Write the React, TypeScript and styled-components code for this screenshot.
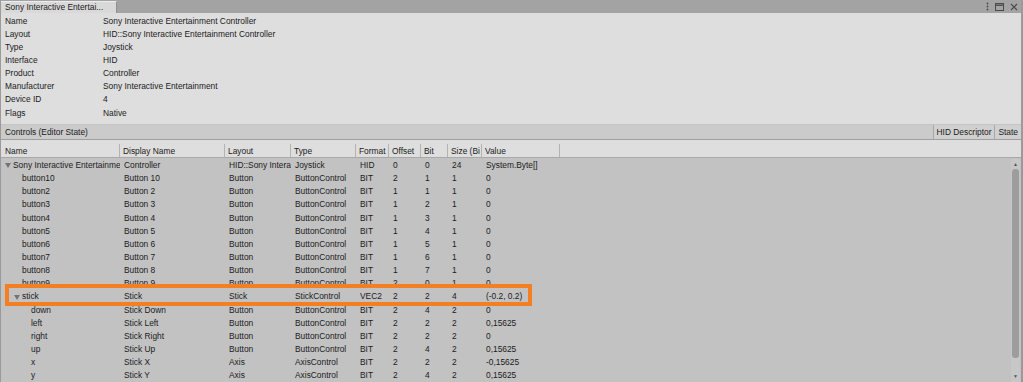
import React from "react";
import styled, { createGlobalStyle } from "styled-components";

type Row = {
  name: string;
  display: string;
  layout: string;
  type: string;
  format: string;
  offset: string;
  bit: string;
  size: string;
  value: string;
  depth: number;
  open?: boolean;
};

const info: [string, string][] = [
  ["Name", "Sony Interactive Entertainment Controller"],
  ["Layout", "HID::Sony Interactive Entertainment Controller"],
  ["Type", "Joystick"],
  ["Interface", "HID"],
  ["Product", "Controller"],
  ["Manufacturer", "Sony Interactive Entertainment"],
  ["Device ID", "4"],
  ["Flags", "Native"],
];

const btn = (n: string, offset: string, bit: string): Row => ({
  name: "button" + n,
  display: "Button " + n,
  layout: "Button",
  type: "ButtonControl",
  format: "BIT",
  offset,
  bit,
  size: "1",
  value: "0",
  depth: 1,
});

// column widths are narrow, so long names show as the window clips them
const rows: Row[] = [
  {
    name: "Sony Interactive Entertainme",
    display: "Controller",
    layout: "HID::Sony Intera",
    type: "Joystick",
    format: "HID",
    offset: "0",
    bit: "0",
    size: "24",
    value: "System.Byte[]",
    depth: 0,
    open: true,
  },
  btn("10", "2", "1"),
  btn("2", "1", "1"),
  btn("3", "1", "2"),
  btn("4", "1", "3"),
  btn("5", "1", "4"),
  btn("6", "1", "5"),
  btn("7", "1", "6"),
  btn("8", "1", "7"),
  btn("9", "2", "0"),
  {
    name: "stick",
    display: "Stick",
    layout: "Stick",
    type: "StickControl",
    format: "VEC2",
    offset: "2",
    bit: "2",
    size: "4",
    value: "(-0.2, 0.2)",
    depth: 1,
    open: true,
  },
  { name: "down", display: "Stick Down", layout: "Button", type: "ButtonControl", format: "BIT", offset: "2", bit: "4", size: "2", value: "0", depth: 2 },
  { name: "left", display: "Stick Left", layout: "Button", type: "ButtonControl", format: "BIT", offset: "2", bit: "2", size: "2", value: "0,15625", depth: 2 },
  { name: "right", display: "Stick Right", layout: "Button", type: "ButtonControl", format: "BIT", offset: "2", bit: "2", size: "2", value: "0", depth: 2 },
  { name: "up", display: "Stick Up", layout: "Button", type: "ButtonControl", format: "BIT", offset: "2", bit: "4", size: "2", value: "0,15625", depth: 2 },
  { name: "x", display: "Stick X", layout: "Axis", type: "AxisControl", format: "BIT", offset: "2", bit: "2", size: "2", value: "-0,15625", depth: 2 },
  { name: "y", display: "Stick Y", layout: "Axis", type: "AxisControl", format: "BIT", offset: "2", bit: "4", size: "2", value: "0,15625", depth: 2 },
];

const headers = ["Name", "Display Name", "Layout", "Type", "Format", "Offset", "Bit", "Size (Bi", "Value", ""];

const App = () => {
  return (
    <>
      <GlobalStyle />
      <Window>
        <TabBar>
          <Tab>Sony Interactive Entertai...</Tab>
          <WindowIcons>
            <svg width="3" height="9" viewBox="0 0 3 9">
              <circle cx="1.5" cy="1.5" r="0.9" fill="#4a4a4a" />
              <circle cx="1.5" cy="4.5" r="0.9" fill="#4a4a4a" />
              <circle cx="1.5" cy="7.5" r="0.9" fill="#4a4a4a" />
            </svg>
            <svg width="9" height="8" viewBox="0 0 9 8">
              <rect x="0.5" y="0.5" width="8" height="7" fill="none" stroke="#4a4a4a" />
              <line x1="0.5" y1="2.2" x2="8.5" y2="2.2" stroke="#4a4a4a" strokeWidth="1.4" />
            </svg>
            <svg width="8" height="8" viewBox="0 0 8 8">
              <path d="M1 1L7 7M7 1L1 7" stroke="#4a4a4a" strokeWidth="1.1" />
            </svg>
          </WindowIcons>
        </TabBar>

        <InfoPanel>
          {info.map(([label, value]) => (
            <React.Fragment key={label}>
              <InfoLabel>{label}</InfoLabel>
              <InfoValue>{value}</InfoValue>
            </React.Fragment>
          ))}
        </InfoPanel>

        <Toolbar>
          <ToolbarTitle>Controls (Editor State)</ToolbarTitle>
          <ToolbarButton>HID Descriptor</ToolbarButton>
          <ToolbarButton>State</ToolbarButton>
        </Toolbar>

        <HeaderRow>
          {headers.map((h, i) => (
            <HeaderCell key={i} $last={i === headers.length - 1}>
              {h}
            </HeaderCell>
          ))}
        </HeaderRow>

        <Body>
          <Rows>
            {rows.map((r) => (
              <TableRow key={r.name}>
                <NameCell $depth={r.depth}>
                  {r.open && (
                    <Arrow width="6" height="5" viewBox="0 0 6 5">
                      <path d="M0 0H6L3 5Z" fill="#747474" />
                    </Arrow>
                  )}
                  {r.name}
                </NameCell>
                <Cell>{r.display}</Cell>
                <Cell>{r.layout}</Cell>
                <Cell>{r.type}</Cell>
                <Cell>{r.format}</Cell>
                <Cell>{r.offset}</Cell>
                <Cell>{r.bit}</Cell>
                <Cell>{r.size}</Cell>
                <Cell>{r.value}</Cell>
                <Cell />
              </TableRow>
            ))}
            <Highlight />
          </Rows>
          <Scrollbar>
            <ScrollArrow>▲</ScrollArrow>
            <Thumb />
            <ScrollSpacer />
            <ScrollArrow>▼</ScrollArrow>
          </Scrollbar>
        </Body>
      </Window>
    </>
  );
};

export default App;

const GlobalStyle = createGlobalStyle`
  html, body {
    margin: 0;
    padding: 0;
    background: #a3a3a3;
  }
  * {
    box-sizing: border-box;
  }
`;

const columns = "119px 105px 66px 65px 33px 32px 27px 34px 78px 1fr";
const rowHeight = "13.15px";

const Window = styled.div`
  width: 1023px;
  height: 382px;
  display: flex;
  flex-direction: column;
  overflow: hidden;
  background: #a3a3a3;
  border-left: 1px solid #9a9a9a;
  border-right: 2px solid #9a9a9a;
  font-family: "Liberation Sans", Arial, sans-serif;
  font-size: 8.4px;
  color: #1b1b1b;
`;

const TabBar = styled.div`
  height: 13px;
  display: flex;
  align-items: flex-end;
  justify-content: space-between;
  background: #a3a3a3;
`;

const Tab = styled.div`
  width: 116px;
  height: 12px;
  background: #d9d9d9;
  border-top: 1px solid #ececec;
  border-right: 1px solid #8f8f8f;
  padding-left: 4px;
  line-height: 11px;
  white-space: nowrap;
  overflow: hidden;
`;

const WindowIcons = styled.div`
  display: flex;
  align-items: center;
  gap: 6px;
  height: 13px;
  padding-right: 3px;
`;

const InfoPanel = styled.div`
  height: 111px;
  background: #dedede;
  padding: 1px 4px 0;
  display: grid;
  grid-template-columns: 98px 1fr;
  grid-auto-rows: ${rowHeight};
  align-items: center;
`;

const InfoLabel = styled.div`
  white-space: nowrap;
`;

const InfoValue = styled.div`
  white-space: nowrap;
`;

const Toolbar = styled.div`
  height: 16px;
  display: flex;
  align-items: stretch;
  background: #cbcbcb;
  border-top: 1px solid #c4c4c4;
  border-bottom: 1px solid #9f9f9f;
`;

const ToolbarTitle = styled.div`
  flex: 1;
  padding-left: 4px;
  display: flex;
  align-items: center;
`;

const ToolbarButton = styled.div`
  display: flex;
  align-items: center;
  padding: 0 3px;
  border-left: 1px solid #a8a8a8;
  background: #d0d0d0;
`;

const HeaderRow = styled.div`
  height: 18px;
  padding-top: 4px;
  display: grid;
  grid-template-columns: ${columns};
  background: #dedede;
  border-bottom: 1px solid #a9a9a9;
`;

const HeaderCell = styled.div<{ $last?: boolean }>`
  padding-left: 3px;
  white-space: nowrap;
  overflow: hidden;
  line-height: 14px;
  border-right: ${(p) => (p.$last ? "none" : "1px solid #b3b3b3")};
  &:first-child {
    padding-left: 4px;
  }
`;

const Body = styled.div`
  flex: 1;
  display: flex;
  background: #c2c2c2;
  min-height: 0;
  padding-top: 1px;
`;

const Rows = styled.div`
  flex: 1;
  position: relative;
`;

const TableRow = styled.div`
  display: grid;
  grid-template-columns: ${columns};
  height: ${rowHeight};
  line-height: ${rowHeight};
`;

const Cell = styled.div`
  padding-left: 4px;
  white-space: nowrap;
  overflow: hidden;
`;

const NameCell = styled.div<{ $depth: number }>`
  padding-left: ${(p) => 12 + p.$depth * 9}px;
  white-space: nowrap;
  overflow: hidden;
`;

const Arrow = styled.svg`
  display: inline-block;
  margin-left: -8px;
  margin-right: 2px;
  vertical-align: middle;
`;

const Highlight = styled.div`
  position: absolute;
  left: 4px;
  top: 125px;
  width: 527px;
  height: 22px;
  border: 4px solid #f47e22;
  pointer-events: none;
`;

const Scrollbar = styled.div`
  width: 9px;
  margin-right: 1px;
  display: flex;
  flex-direction: column;
  align-items: center;
  background: #c7c7c7;
  padding: 2px 0 2px;
`;

const ScrollArrow = styled.div`
  font-size: 5px;
  line-height: 7px;
  color: #555;
`;

const Thumb = styled.div`
  width: 7px;
  height: 189px;
  margin-top: 1px;
  background: #9d9d9d;
  border-radius: 3px;
`;

const ScrollSpacer = styled.div`
  flex: 1;
`;
